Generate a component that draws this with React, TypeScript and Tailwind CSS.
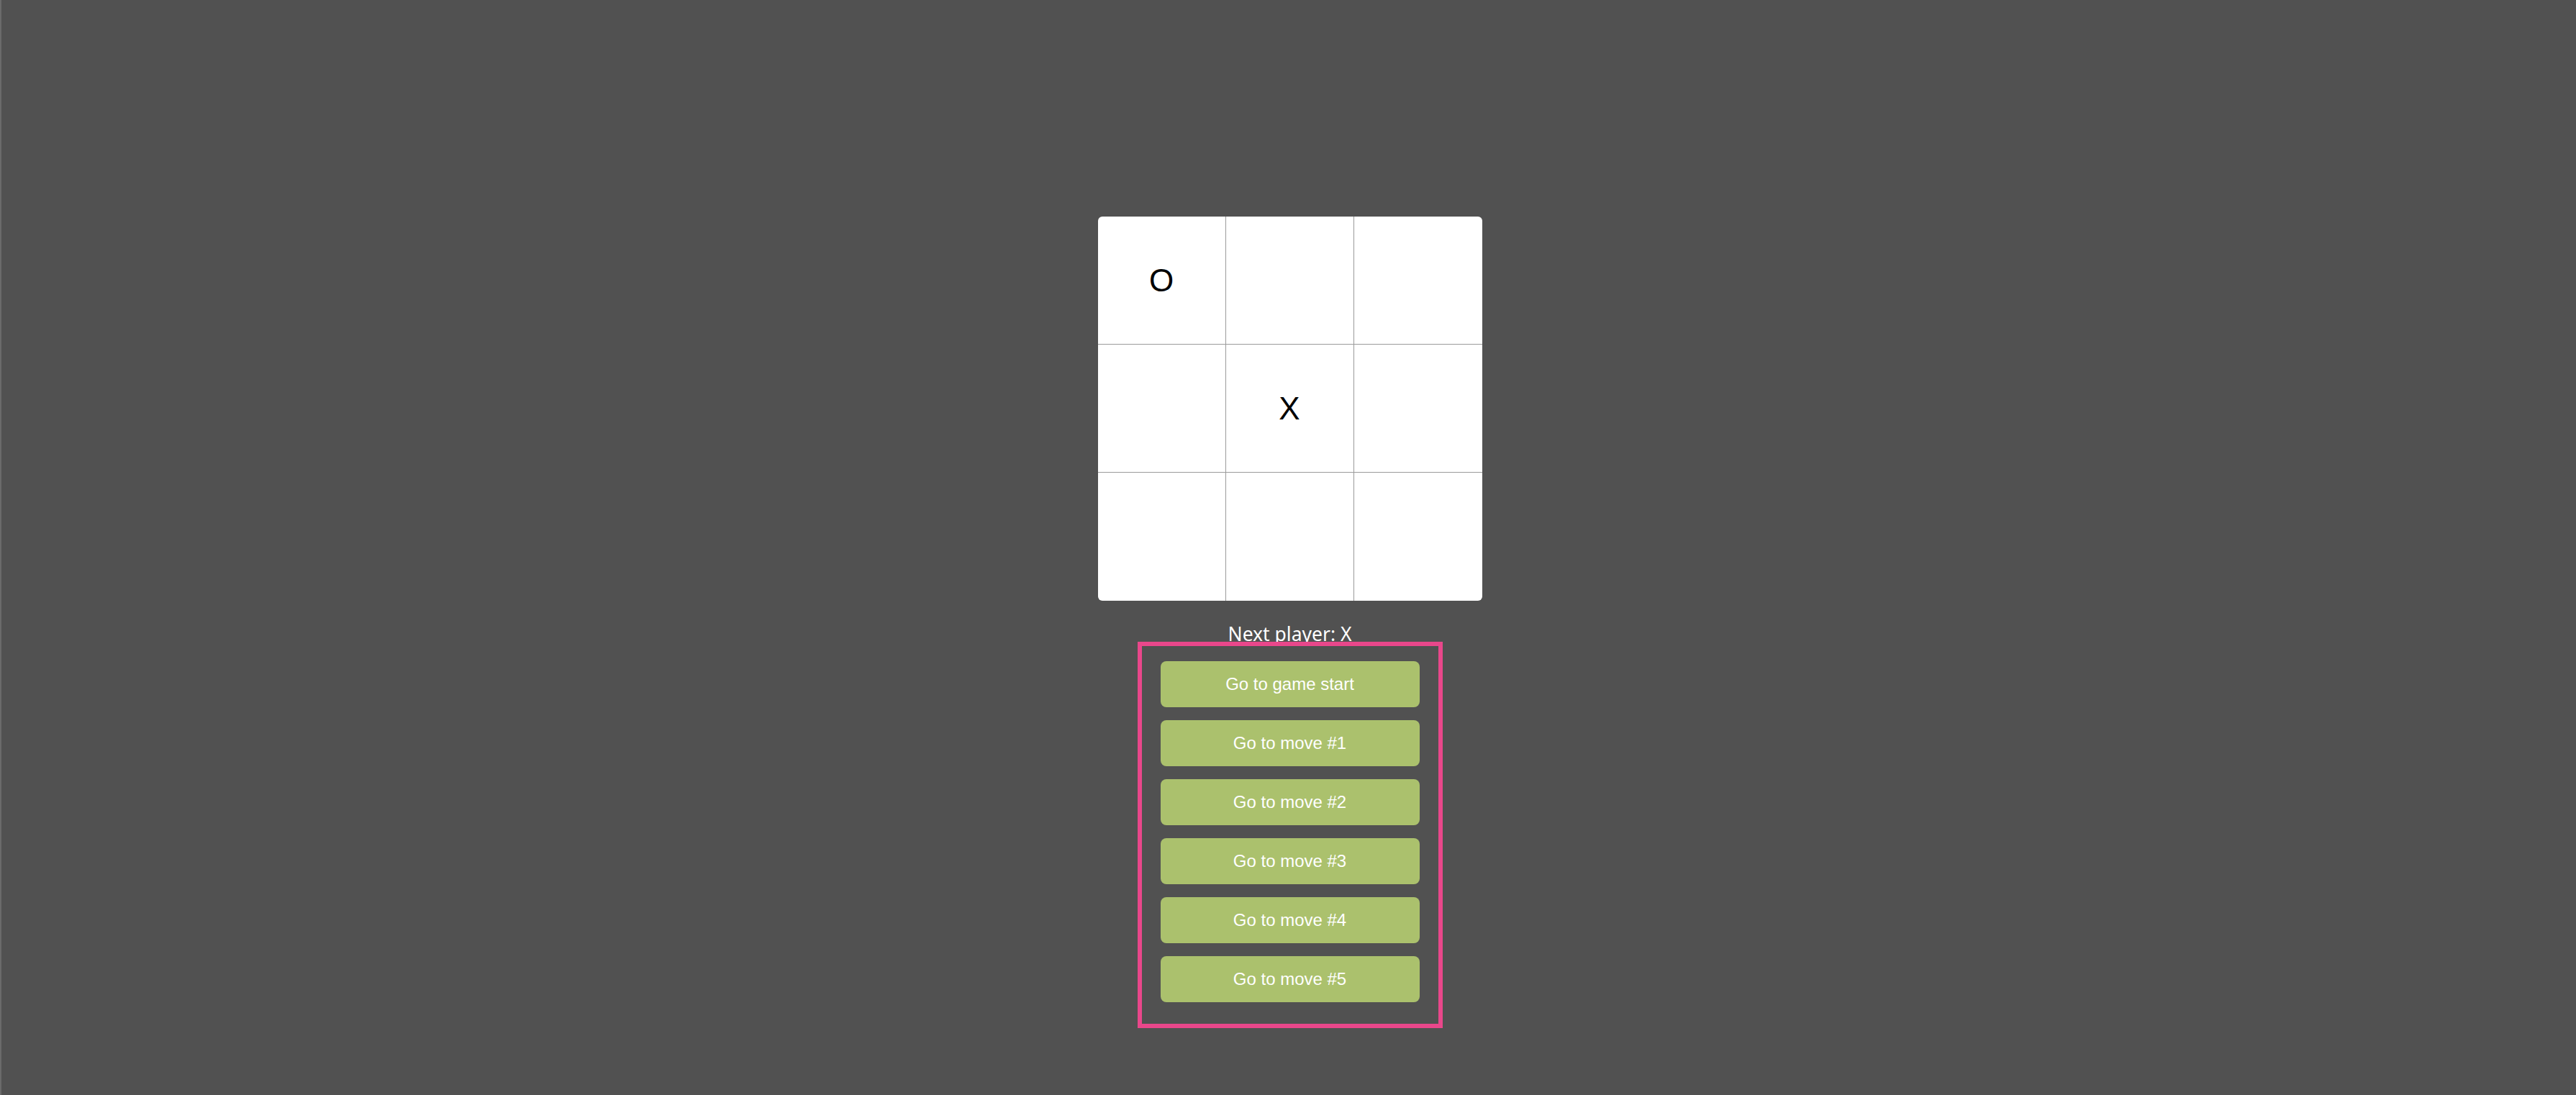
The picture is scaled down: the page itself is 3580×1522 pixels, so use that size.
import React from "react";

const cells: string[] = ["O", "", "", "", "X", "", "", "", ""];
const moves = [
  "Go to game start",
  "Go to move #1",
  "Go to move #2",
  "Go to move #3",
  "Go to move #4",
  "Go to move #5",
];

export default function App() {
  return (
    <div className="flex min-h-[1522px] w-full bg-[#515151]">
      <div className="w-[2px] shrink-0 bg-[#6b6b6b]" />
      <div className="flex flex-1 flex-col items-center pt-[301px] pl-[3px]">
        <div className="grid h-[534px] w-[534px] grid-cols-3 grid-rows-3 overflow-hidden rounded-[6px] bg-white">
          {cells.map((c, i) => (
            <div
              key={i}
              className={
                "flex items-center justify-center border-[#9a9a9a] font-['Liberation_Sans',Arial,sans-serif] text-[44px] leading-none text-black " +
                (i % 3 !== 2 ? "border-r " : "") +
                (i < 6 ? "border-b" : "")
              }
            >
              {c}
            </div>
          ))}
        </div>
        <div className="mt-[33px] h-[24px] overflow-visible font-['Noto_Sans',sans-serif] text-[26.5px] leading-[26px] text-white">
          Next player: X
        </div>
        <div className="flex w-[424px] flex-col items-center gap-[18px] border-[6px] border-[#e9478b] pt-[21px] pb-[30px]">
          {moves.map((m) => (
            <button
              key={m}
              className="flex h-[64px] w-[360px] items-center justify-center rounded-[8px] bg-[#abc16d] font-['Liberation_Sans',Arial,sans-serif] text-[24px] text-white"
            >
              {m}
            </button>
          ))}
        </div>
      </div>
    </div>
  );
}
